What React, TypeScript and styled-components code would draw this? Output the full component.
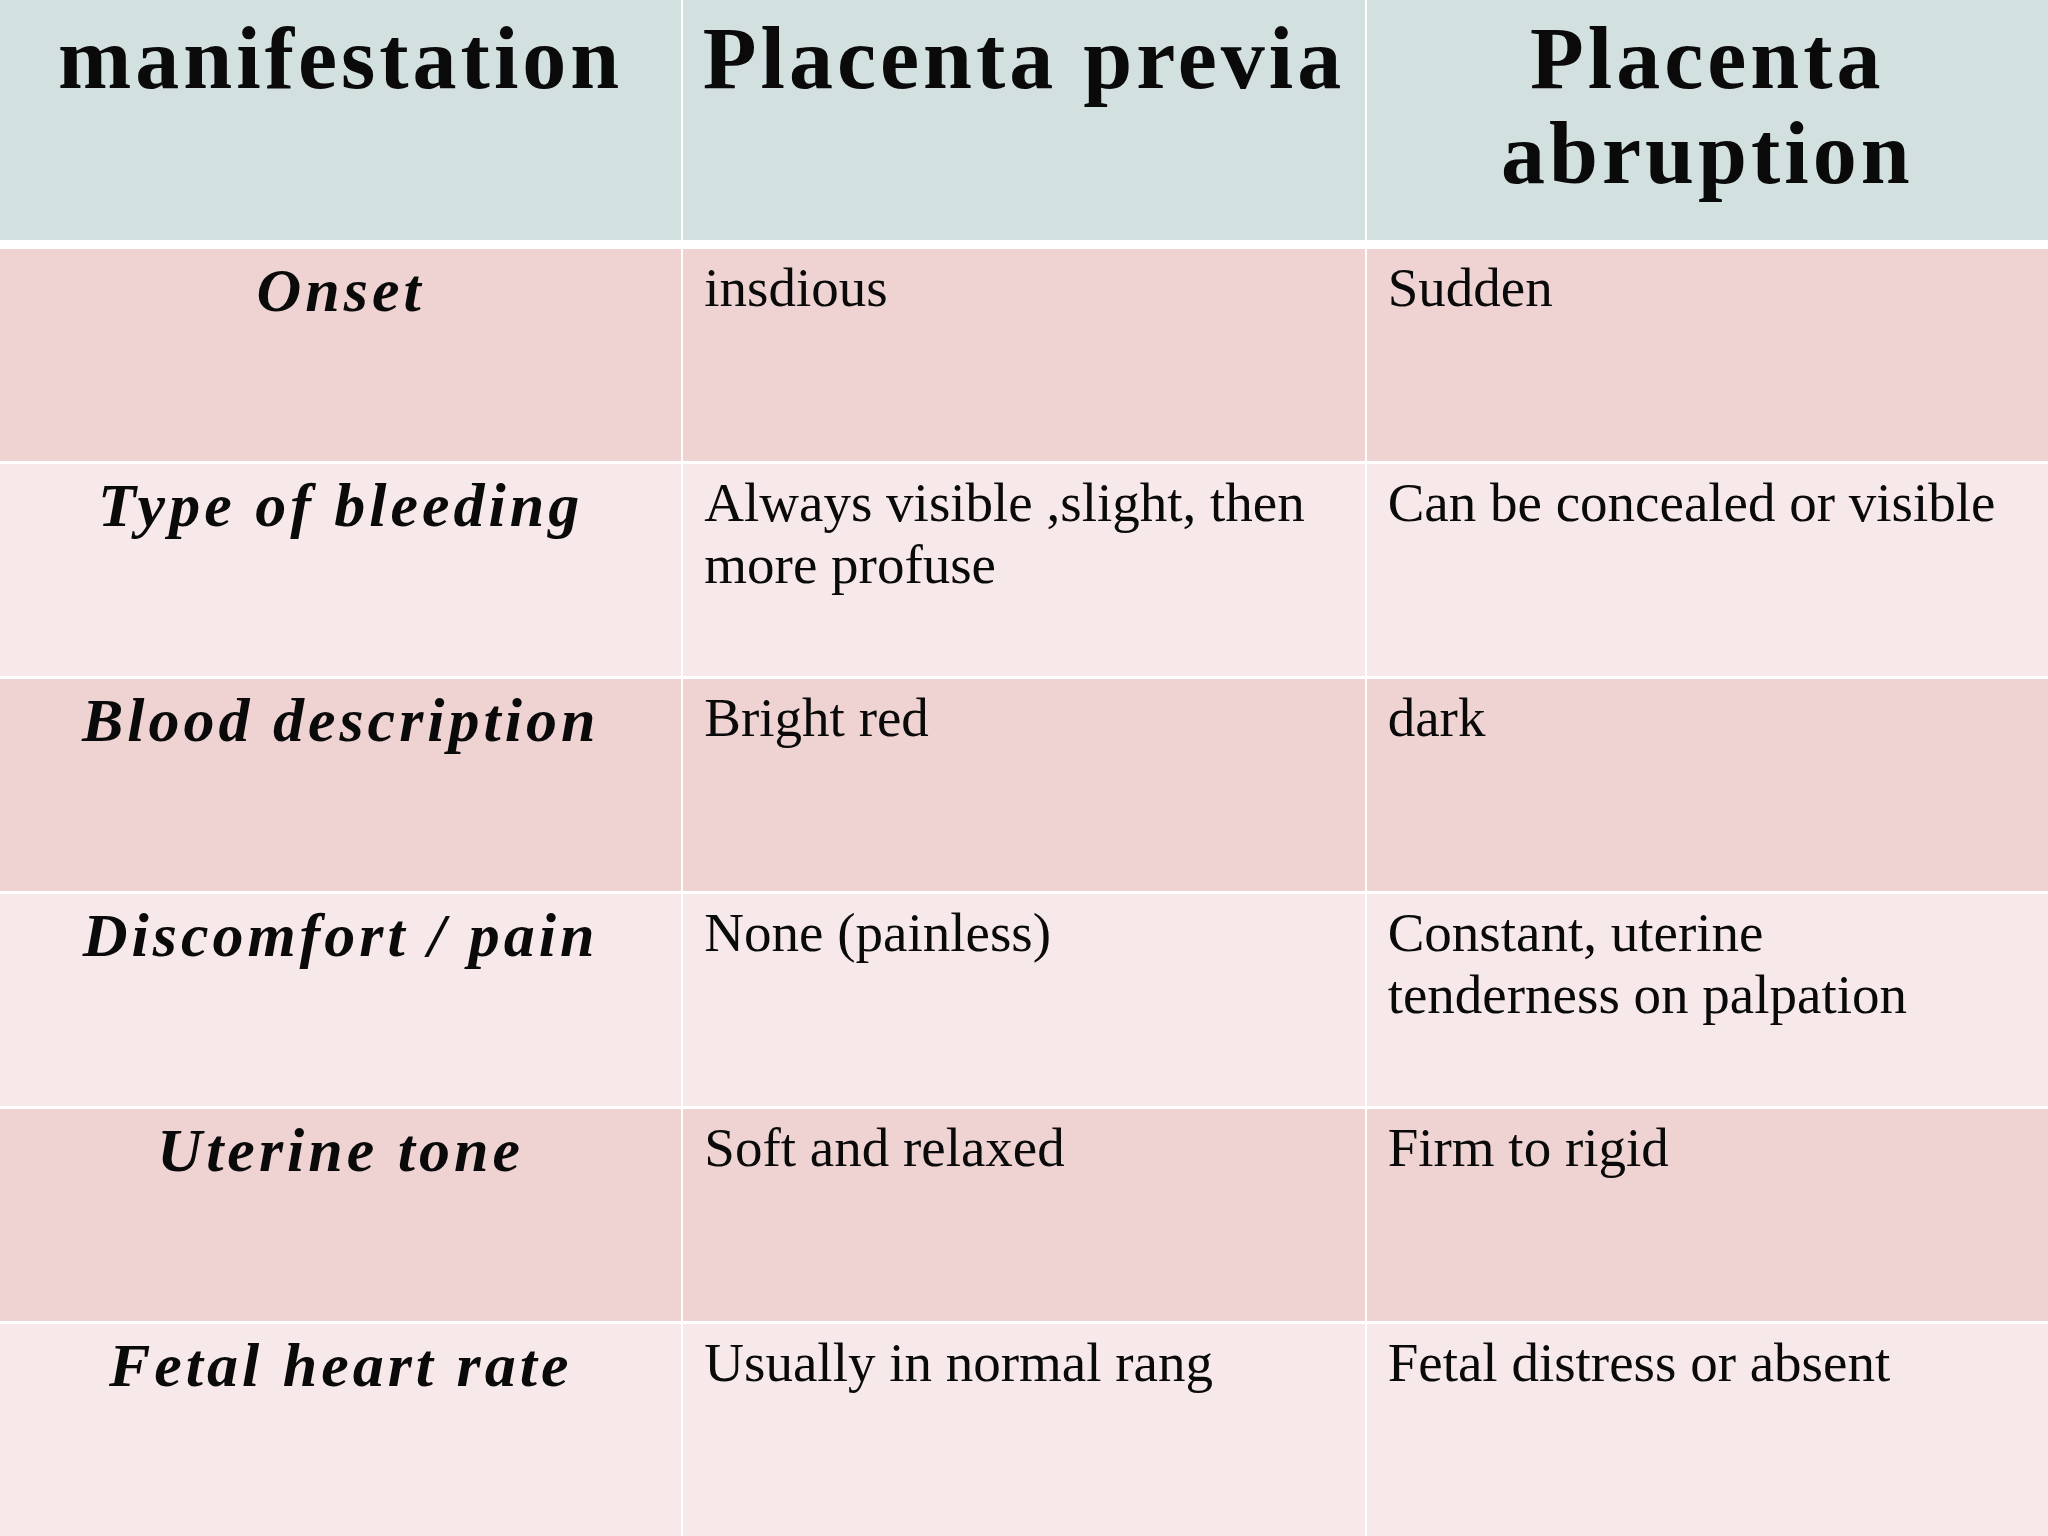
import styled, { createGlobalStyle } from "styled-components";

const GlobalStyle = createGlobalStyle`
  html, body {
    margin: 0;
    padding: 0;
    background: #ffffff;
  }
  body {
    font-family: "Liberation Serif", "Times New Roman", serif;
    color: #0a0a0a;
  }
`;

type Row = {
  label: string;
  previa: string;
  abruption: string;
};

const rows: Row[] = [
  { label: "Onset", previa: "insdious", abruption: "Sudden" },
  {
    label: "Type of bleeding",
    previa: "Always visible ,slight, then more profuse",
    abruption: "Can be concealed or visible",
  },
  { label: "Blood description", previa: "Bright red", abruption: "dark" },
  {
    label: "Discomfort / pain",
    previa: "None (painless)",
    abruption: "Constant, uterine tenderness on palpation",
  },
  { label: "Uterine tone", previa: "Soft and relaxed", abruption: "Firm to rigid" },
  {
    label: "Fetal heart rate",
    previa: "Usually in normal rang",
    abruption: "Fetal distress or absent",
  },
];

export default function App() {
  return (
    <>
      <GlobalStyle />
      <Table>
        <HeadRow>
          <HeadCell>manifestation</HeadCell>
          <HeadCell>Placenta previa</HeadCell>
          <HeadCell>
            Placenta
            <br />
            abruption
          </HeadCell>
        </HeadRow>
        <Body>
          {rows.map((row, i) => (
            <BodyRow key={row.label} $shade={i % 2 === 0 ? "dark" : "light"}>
              <LabelCell>{row.label}</LabelCell>
              <TextCell>{row.previa}</TextCell>
              <TextCell>{row.abruption}</TextCell>
            </BodyRow>
          ))}
        </Body>
      </Table>
    </>
  );
}

const Table = styled.div`
  width: 2048px;
  height: 1536px;
  display: flex;
  flex-direction: column;
  gap: 9px;
  background: #ffffff;
`;

const HeadRow = styled.div`
  display: grid;
  grid-template-columns: repeat(3, 1fr);
  column-gap: 2px;
  height: 240px;
`;

const HeadCell = styled.div`
  background: #d3e0e0;
  padding: 11px 0 0;
  text-align: center;
  font-size: 88px;
  font-weight: bold;
  letter-spacing: 4px;
  line-height: 95px;
  white-space: nowrap;
`;

const Body = styled.div`
  flex: 1;
  display: grid;
  grid-template-rows: repeat(6, 1fr);
  row-gap: 3px;
`;

const BodyRow = styled.div<{ $shade: "dark" | "light" }>`
  display: grid;
  grid-template-columns: repeat(3, 1fr);
  column-gap: 2px;

  & > div {
    background: ${(p) => (p.$shade === "dark" ? "#efd3d2" : "#f7e9ea")};
  }
`;

const LabelCell = styled.div`
  padding: 7px 0 0;
  text-align: center;
  font-size: 62px;
  font-weight: bold;
  font-style: italic;
  letter-spacing: 4px;
  line-height: 69px;
  white-space: nowrap;
`;

const TextCell = styled.div`
  padding: 8px 45px 0 21px;
  font-size: 55px;
  line-height: 62px;
`;
